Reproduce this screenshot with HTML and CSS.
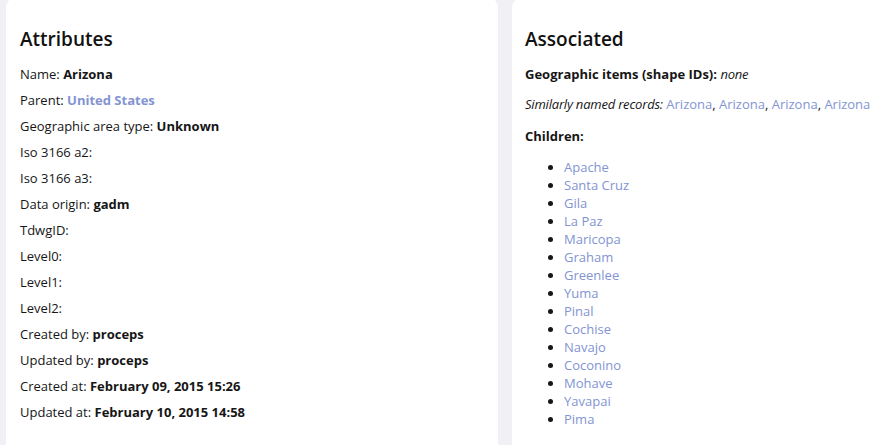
FILE: index.html
```html
<!DOCTYPE html>
<html>
<head>
<meta charset="utf-8">
<link rel="stylesheet" href="styles.css">
</head>
<body>
<div class="page">
  <section class="card">
    <h2 class="title">Attributes</h2>
    <p class="row">Name: <b>Arizona</b></p>
    <p class="row">Parent: <a class="link strong" href="#">United States</a></p>
    <p class="row">Geographic area type: <b>Unknown</b></p>
    <p class="row">Iso 3166 a2:</p>
    <p class="row">Iso 3166 a3:</p>
    <p class="row">Data origin: <b>gadm</b></p>
    <p class="row">TdwgID:</p>
    <p class="row">Level0:</p>
    <p class="row">Level1:</p>
    <p class="row">Level2:</p>
    <p class="row">Created by: <b>proceps</b></p>
    <p class="row">Updated by: <b>proceps</b></p>
    <p class="row">Created at: <b>February 09, 2015 15:26</b></p>
    <p class="row">Updated at: <b>February 10, 2015 14:58</b></p>
  </section>
  <section class="card">
    <h2 class="title">Associated</h2>
    <p class="arow"><b>Geographic items (shape IDs):</b> <i>none</i></p>
    <p class="arow"><i>Similarly named records:</i> <a class="link" href="#">Arizona</a>, <a class="link" href="#">Arizona</a>, <a class="link" href="#">Arizona</a>, <a class="link" href="#">Arizona</a></p>
    <p class="arow children"><b>Children:</b></p>
    <ul class="kids">
      <li><a class="link" href="#">Apache</a></li>
      <li><a class="link" href="#">Santa Cruz</a></li>
      <li><a class="link" href="#">Gila</a></li>
      <li><a class="link" href="#">La Paz</a></li>
      <li><a class="link" href="#">Maricopa</a></li>
      <li><a class="link" href="#">Graham</a></li>
      <li><a class="link" href="#">Greenlee</a></li>
      <li><a class="link" href="#">Yuma</a></li>
      <li><a class="link" href="#">Pinal</a></li>
      <li><a class="link" href="#">Cochise</a></li>
      <li><a class="link" href="#">Navajo</a></li>
      <li><a class="link" href="#">Coconino</a></li>
      <li><a class="link" href="#">Mohave</a></li>
      <li><a class="link" href="#">Yavapai</a></li>
      <li><a class="link" href="#">Pima</a></li>
    </ul>
  </section>
</div>
</body>
</html>
```
FILE: styles.css
```css
html, body {
  margin: 0;
  padding: 0;
  background: #f0f0f5;
  overflow: hidden;
}
body {
  font-family: "Open Sans", "Noto Sans", sans-serif;
  font-size: 13px;
  color: #161616;
}
.page {
  display: flex;
  gap: 14px;
  padding-left: 6px;
  margin-top: -4px;
}
.card {
  flex: 0 0 492px;
  background: #fff;
  border-radius: 12px;
  padding: 30px 14px 40px;
  box-sizing: border-box;
  min-height: 480px;
}
.card + .card {
  padding-left: 13px;
}
.title {
  margin: 0 0 13px;
  font-size: 19px;
  line-height: 26px;
  font-weight: 600;
  color: #111;
}
.row {
  margin: 0 0 8px;
  line-height: 18px;
}
.arow {
  margin: 0 0 12px;
  line-height: 18px;
}
.children {
  margin-top: 14px;
  margin-bottom: 13px;
}
b { font-weight: 700; }
i { letter-spacing: -0.2px; }
.link {
  color: #8394d2;
  text-decoration: none;
  font-style: normal;
}
.link.strong { font-weight: 700; }
.kids {
  margin: 0;
  padding-left: 39px;
}
.kids li {
  line-height: 18px;
}
```
